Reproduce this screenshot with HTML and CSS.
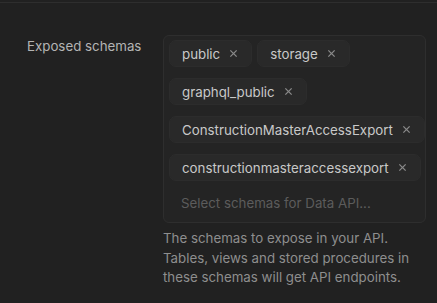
FILE: index.html
```html
<!DOCTYPE html>
<html lang="en">
<head>
  <meta charset="UTF-8">
  <meta name="viewport" content="width=device-width, initial-scale=1.0">
  <title>Exposed schemas</title>
  <link rel="stylesheet" href="styles.css">
</head>
<body>

<div class="divider"></div>

<div class="field">
  <label class="field-label">Exposed schemas</label>
  <div class="field-control">
    <div class="multiselect">
      <div class="chips">
        <span class="chip">public <svg class="chip-x" viewBox="0 0 10 10"><path d="M1.5 1.5 L8.5 8.5 M8.5 1.5 L1.5 8.5"/></svg></span>
        <span class="chip">storage <svg class="chip-x" viewBox="0 0 10 10"><path d="M1.5 1.5 L8.5 8.5 M8.5 1.5 L1.5 8.5"/></svg></span>
        <span class="chip">graphql_public <svg class="chip-x" viewBox="0 0 10 10"><path d="M1.5 1.5 L8.5 8.5 M8.5 1.5 L1.5 8.5"/></svg></span>
        <span class="chip">ConstructionMasterAccessExport <svg class="chip-x" viewBox="0 0 10 10"><path d="M1.5 1.5 L8.5 8.5 M8.5 1.5 L1.5 8.5"/></svg></span>
        <span class="chip">constructionmasteraccessexport <svg class="chip-x" viewBox="0 0 10 10"><path d="M1.5 1.5 L8.5 8.5 M8.5 1.5 L1.5 8.5"/></svg></span>
      </div>
      <div class="placeholder">Select schemas for Data API...</div>
    </div>
    <p class="field-help">The schemas to expose in your API. Tables, views and stored procedures in these schemas will get API endpoints.</p>
  </div>
</div>

</body>
</html>
```

FILE: styles.css
```css
body {
  margin: 0;
  padding: 0;
  background-color: #212121;
  font-family: Inter, "Noto Sans", sans-serif;
  font-size: 13.3px;
}

.divider {
  height: 2px;
  border-bottom: 1px solid #2e2e2e;
}

.field {
  display: flex;
  padding-top: 32px;
}

.field-label {
  flex-shrink: 0;
  width: 163px;
  padding-left: 27px;
  padding-top: 3px;
  box-sizing: border-box;
  color: #b4b4b4;
  white-space: nowrap;
}

.field-control {
  width: 263px;
  flex-shrink: 0;
}

.multiselect {
  border: 1px solid #2e2e2e;
  border-radius: 6px;
  background-color: #242424;
  padding: 4px 5px 0 5px;
}

.chips {
  display: flex;
  flex-wrap: wrap;
  gap: 11px 5px;
}

.chip {
  display: inline-flex;
  align-items: center;
  height: 27px;
  padding: 0 13px 0 12px;
  box-sizing: border-box;
  border: 1px solid #2c2c2c;
  border-radius: 7px;
  background-color: #292929;
  color: #c8c8c8;
  white-space: nowrap;
}

.chip-x {
  width: 9px;
  height: 9px;
  margin-left: 9px;
  stroke: #8a8a8a;
  stroke-width: 1.4;
  fill: none;
}

.placeholder {
  color: #5c5c5c;
  padding: 14px 12px 11px 12px;
}

.field-help {
  margin: 6px 0 0 0;
  color: #8e8e8e;
  line-height: 19.5px;
}
```
